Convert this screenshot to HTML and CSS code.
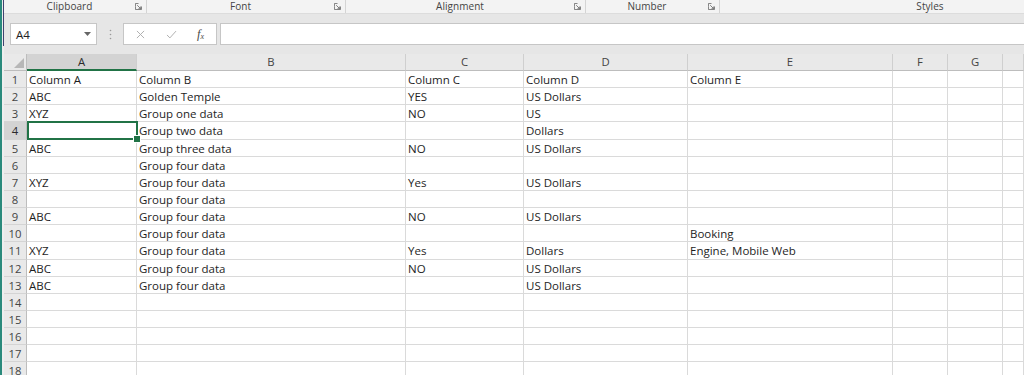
FILE: index.html
```html
<!DOCTYPE html>
<html>
<head>
<meta charset="utf-8">
<link rel="stylesheet" href="styles.css">
</head>
<body>
<div class="app">
  <div class="edge"><div class="edge-top"></div></div>
  <div class="main">
    <div class="ribbon">
      <div class="grp"><span class="lbl">Clipboard</span><svg class="launch" viewBox="0 0 8 8"><path d="M0.5 4V0.5H4M0.5 4V7.5H7.5V4" /><path d="M2.5 2.5L6.5 6.5M6.5 4V6.5H4" /></svg></div>
      <div class="grp"><span class="lbl">Font</span><svg class="launch" viewBox="0 0 8 8"><path d="M0.5 4V0.5H4M0.5 4V7.5H7.5V4" /><path d="M2.5 2.5L6.5 6.5M6.5 4V6.5H4" /></svg></div>
      <div class="grp"><span class="lbl">Alignment</span><svg class="launch" viewBox="0 0 8 8"><path d="M0.5 4V0.5H4M0.5 4V7.5H7.5V4" /><path d="M2.5 2.5L6.5 6.5M6.5 4V6.5H4" /></svg></div>
      <div class="grp"><span class="lbl">Number</span><svg class="launch" viewBox="0 0 8 8"><path d="M0.5 4V0.5H4M0.5 4V7.5H7.5V4" /><path d="M2.5 2.5L6.5 6.5M6.5 4V6.5H4" /></svg></div>
      <div class="grp grp-styles"><span class="lbl">Styles</span></div>
    </div>
    <div class="fbar">
      <div class="namebox"><span>A4</span><svg class="dd" viewBox="0 0 7 4"><path d="M0 0H7L3.5 4Z"/></svg></div>
      <svg class="dots" viewBox="0 0 3 11"><circle cx="1.5" cy="1.5" r="0.8"/><circle cx="1.5" cy="5.5" r="0.8"/><circle cx="1.5" cy="9.5" r="0.8"/></svg>
      <div class="fnbox">
        <svg class="ico" viewBox="0 0 10 10"><path d="M1 1L9 9M9 1L1 9"/></svg>
        <svg class="ico" viewBox="0 0 12 10"><path d="M1 5.5L4.2 8.8L11 1.2"/></svg>
        <span class="fx">f<sub>x</sub></span>
      </div>
      <div class="finput"></div>
    </div>
    <div class="sheet">
      <div class="ch corner"><svg viewBox="0 0 10 10"><path d="M10 0V10H0Z"/></svg></div>
      <div class="ch csel">A</div><div class="ch">B</div><div class="ch">C</div><div class="ch">D</div><div class="ch">E</div><div class="ch">F</div><div class="ch">G</div><div class="ch"></div>

      <div class="rh">1</div><div class="c">Column A</div><div class="c">Column B</div><div class="c">Column C</div><div class="c">Column D</div><div class="c">Column E</div><div class="c"></div><div class="c"></div><div class="c"></div>
      <div class="rh">2</div><div class="c">ABC</div><div class="c">Golden Temple</div><div class="c">YES</div><div class="c">US Dollars</div><div class="c"></div><div class="c"></div><div class="c"></div><div class="c"></div>
      <div class="rh">3</div><div class="c">XYZ</div><div class="c">Group one data</div><div class="c">NO</div><div class="c">US</div><div class="c"></div><div class="c"></div><div class="c"></div><div class="c"></div>
      <div class="rh rsel">4</div><div class="c sel"></div><div class="c">Group two data</div><div class="c"></div><div class="c">Dollars</div><div class="c"></div><div class="c"></div><div class="c"></div><div class="c"></div>
      <div class="rh">5</div><div class="c">ABC</div><div class="c">Group three data</div><div class="c">NO</div><div class="c">US Dollars</div><div class="c"></div><div class="c"></div><div class="c"></div><div class="c"></div>
      <div class="rh">6</div><div class="c"></div><div class="c">Group four data</div><div class="c"></div><div class="c"></div><div class="c"></div><div class="c"></div><div class="c"></div><div class="c"></div>
      <div class="rh">7</div><div class="c">XYZ</div><div class="c">Group four data</div><div class="c">Yes</div><div class="c">US Dollars</div><div class="c"></div><div class="c"></div><div class="c"></div><div class="c"></div>
      <div class="rh">8</div><div class="c"></div><div class="c">Group four data</div><div class="c"></div><div class="c"></div><div class="c"></div><div class="c"></div><div class="c"></div><div class="c"></div>
      <div class="rh">9</div><div class="c">ABC</div><div class="c">Group four data</div><div class="c">NO</div><div class="c">US Dollars</div><div class="c"></div><div class="c"></div><div class="c"></div><div class="c"></div>
      <div class="rh">10</div><div class="c"></div><div class="c">Group four data</div><div class="c"></div><div class="c"></div><div class="c">Booking</div><div class="c"></div><div class="c"></div><div class="c"></div>
      <div class="rh">11</div><div class="c">XYZ</div><div class="c">Group four data</div><div class="c">Yes</div><div class="c">Dollars</div><div class="c">Engine, Mobile Web</div><div class="c"></div><div class="c"></div><div class="c"></div>
      <div class="rh">12</div><div class="c">ABC</div><div class="c">Group four data</div><div class="c">NO</div><div class="c">US Dollars</div><div class="c"></div><div class="c"></div><div class="c"></div><div class="c"></div>
      <div class="rh">13</div><div class="c">ABC</div><div class="c">Group four data</div><div class="c"></div><div class="c">US Dollars</div><div class="c"></div><div class="c"></div><div class="c"></div><div class="c"></div>
      <div class="rh">14</div><div class="c"></div><div class="c"></div><div class="c"></div><div class="c"></div><div class="c"></div><div class="c"></div><div class="c"></div><div class="c"></div>
      <div class="rh">15</div><div class="c"></div><div class="c"></div><div class="c"></div><div class="c"></div><div class="c"></div><div class="c"></div><div class="c"></div><div class="c"></div>
      <div class="rh">16</div><div class="c"></div><div class="c"></div><div class="c"></div><div class="c"></div><div class="c"></div><div class="c"></div><div class="c"></div><div class="c"></div>
      <div class="rh">17</div><div class="c"></div><div class="c"></div><div class="c"></div><div class="c"></div><div class="c"></div><div class="c"></div><div class="c"></div><div class="c"></div>
      <div class="rh">18</div><div class="c"></div><div class="c"></div><div class="c"></div><div class="c"></div><div class="c"></div><div class="c"></div><div class="c"></div><div class="c"></div>
    </div>
  </div>
</div>
</body>
</html>
```

FILE: styles.css
```css
* { box-sizing: border-box; }
html, body { margin: 0; padding: 0; }
body {
  width: 1024px;
  height: 375px;
  overflow: hidden;
  background: #ffffff;
  font-family: "Open Sans", "Noto Sans", sans-serif;
}
.app {
  display: flex;
  width: 1024px;
  height: 375px;
  overflow: hidden;
}
.edge {
  width: 4px;
  flex: none;
  border-left: 2px solid #2a8a7c;
  background: #eeeeee;
}
.edge-top {
  height: 46px;
  margin-left: 1px;
  border-right: 1px solid #3f4370;
}
.main {
  flex: 1;
  min-width: 0;
  display: flex;
  flex-direction: column;
}
.main > * { flex: none; }

/* ribbon group labels */
.ribbon {
  height: 14px;
  display: grid;
  grid-template-columns: 143px 199px 240px 134px 1fr;
  background: #f3f3f3;
  border-bottom: 1px solid #dcdcdc;
}
.grp {
  display: flex;
  align-items: center;
  border-right: 1px solid #d4d4d4;
  height: 13px;
  padding-right: 4px;
}
.grp-styles {
  border-right: none;
  padding-left: 116px;
  padding-right: 0;
}
.lbl {
  flex: 1;
  text-align: center;
  font-size: 10px;
  line-height: 13px;
  color: #444444;
  letter-spacing: 0.05px;
}
.launch {
  width: 7px;
  height: 7px;
  fill: none;
  stroke: #6f6f6f;
  stroke-width: 1;
}

/* formula bar */
.fbar {
  height: 40px;
  background: #e6e6e6;
  display: flex;
  align-items: flex-start;
  padding-top: 9px;
}
.namebox {
  margin-left: 6px;
  width: 87px;
  height: 22px;
  background: #ffffff;
  border: 1px solid #c6c6c6;
  display: flex;
  align-items: center;
  justify-content: space-between;
  padding: 0 5px 0 5px;
  font-size: 11.5px;
  color: #222;
}
.dd { width: 7px; height: 4px; fill: #666; }
.dots {
  width: 3px;
  height: 11px;
  margin: 6px 11px 0 12px;
  fill: #9a9a9a;
}
.fnbox {
  width: 94px;
  height: 22px;
  background: #ffffff;
  border: 1px solid #c6c6c6;
  display: flex;
  align-items: center;
  padding-left: 12px;
}
.ico {
  fill: none;
  stroke: #b0b0b0;
  stroke-width: 1.1;
}
.ico:first-child { width: 9px; height: 9px; margin-right: 21px; }
.ico:nth-child(2) { width: 11px; height: 9px; margin-right: 20px; }
.fx {
  font-family: "Liberation Serif", serif;
  font-style: italic;
  font-size: 12.5px;
  color: #4a4a4a;
  line-height: 1;
}
.fx sub { font-size: 8px; vertical-align: -1px; }
.finput {
  flex: 1;
  margin-left: 3px;
  height: 22px;
  background: #ffffff;
  border: 1px solid #c6c6c6;
  border-right: none;
}

/* sheet */
.sheet {
  display: grid;
  grid-template-columns: 23px 110px 269px 118px 164px 205px 55px 55px 1fr;
  grid-template-rows: 17px;
  grid-auto-rows: 17.15px;
  background: #ffffff;
}
.ch {
  background: #e9e9e9;
  border-right: 1px solid #cfcfcf;
  border-bottom: 1px solid #bdbdbd;
  font-size: 11.3px;
  color: #444444;
  text-align: center;
  line-height: 16px;
}
.corner {
  display: flex;
  align-items: flex-end;
  justify-content: flex-end;
  padding: 0 2px 2px 0;
  border-right: 1px solid #bdbdbd;
}
.corner svg { width: 10px; height: 10px; fill: #b7b7b7; }
.csel {
  background: #d3d3d3;
  border-bottom: 2px solid #217346;
  color: #2b2b2b;
}
.rh {
  background: #e9e9e9;
  border-right: 1px solid #bdbdbd;
  border-bottom: 1px solid #d4d4d4;
  font-size: 11.3px;
  color: #444444;
  text-align: center;
  line-height: 17px;
}
.rsel { background: #d3d3d3; color: #2b2b2b; }
.c {
  border-right: 1px solid #dadada;
  border-bottom: 1px solid #dadada;
  font-size: 11.5px;
  color: #1e1e1e;
  line-height: 17px;
  padding-left: 2px;
  white-space: nowrap;
  overflow: visible;
}
.sel { position: relative; }
.sel::before {
  content: "";
  position: absolute;
  left: 0;
  top: -1px;
  right: -2px;
  bottom: -1px;
  border: 2px solid #217346;
}
.sel::after {
  content: "";
  position: absolute;
  right: -5px;
  bottom: -4px;
  width: 6px;
  height: 6px;
  background: #217346;
  border: 1px solid #ffffff;
}
```
